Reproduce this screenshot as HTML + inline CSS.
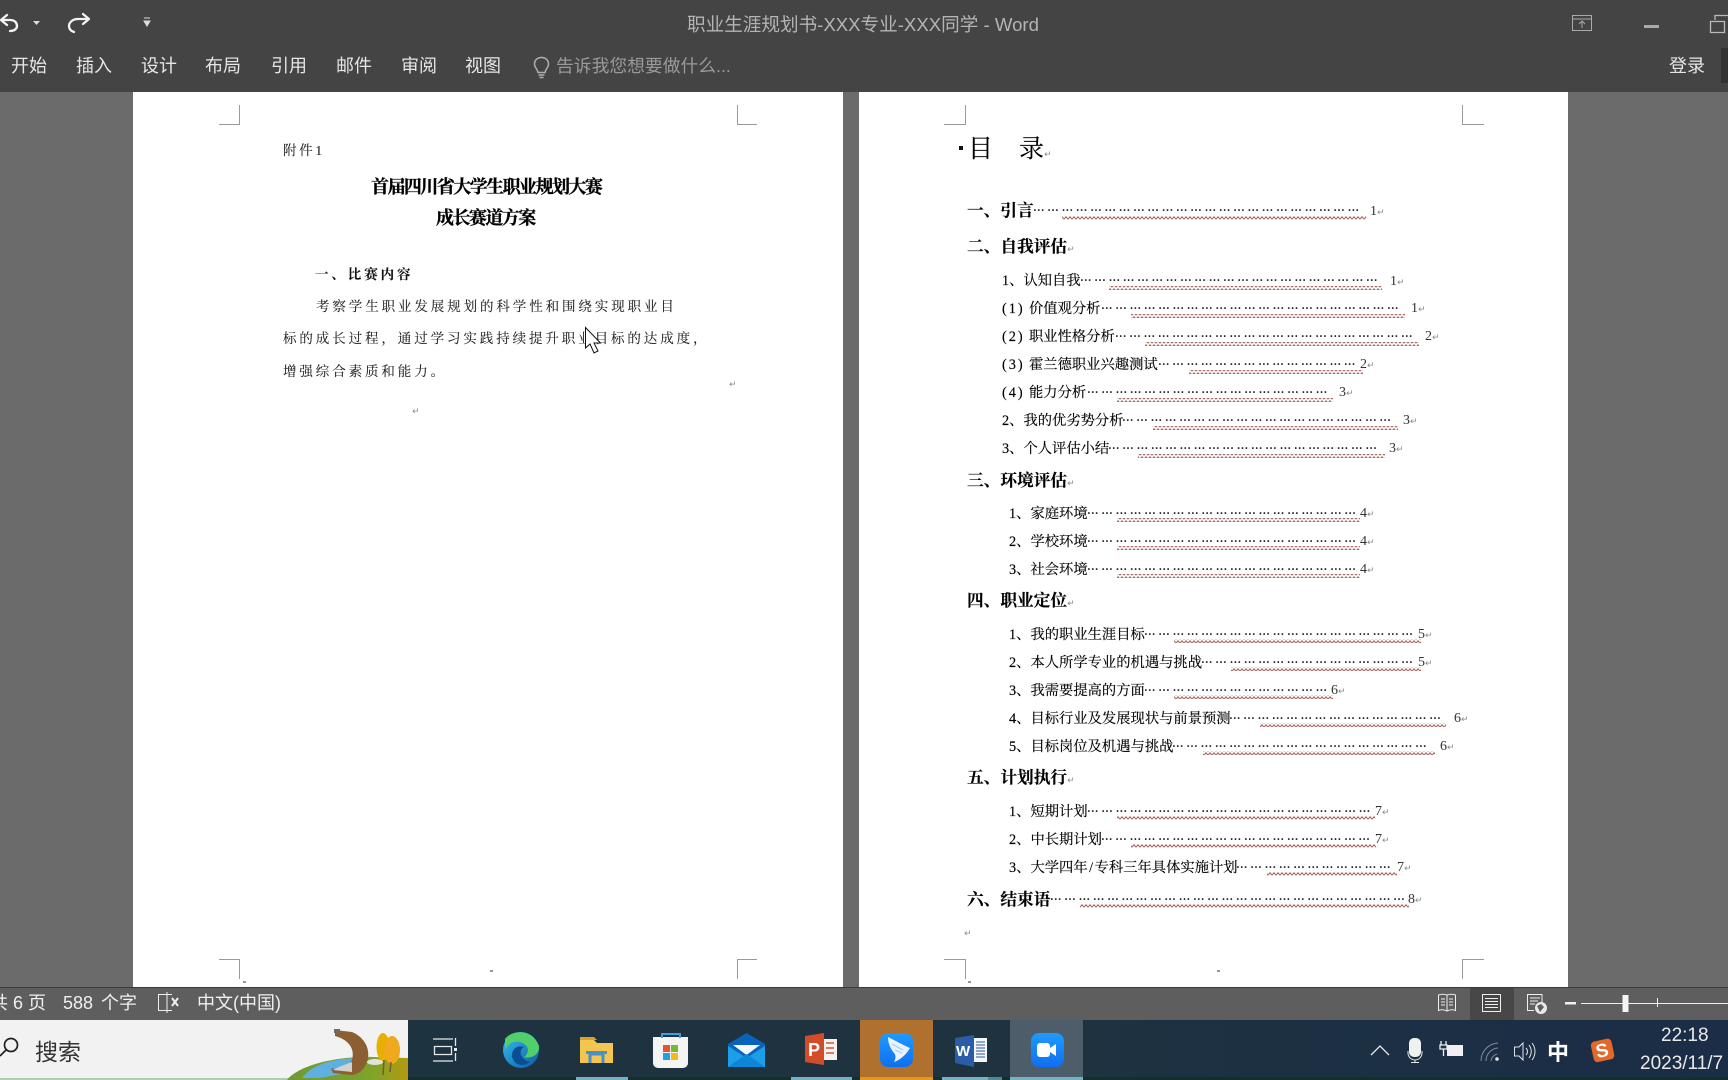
<!DOCTYPE html>
<html lang="zh-CN"><head><meta charset="utf-8"><title>Word</title>
<style>
html,body{margin:0;padding:0;width:1728px;height:1080px;overflow:hidden;background:#6b6b6b}
body{position:relative;font-family:"Liberation Sans","Noto Sans CJK SC",sans-serif}
.b{position:absolute}
.u{position:absolute;white-space:nowrap;color:#e6e6e6;font-size:18px;line-height:24px;height:24px}
.t{position:absolute;white-space:nowrap;height:20px;line-height:20px;margin-top:1px;font-size:14.3px;color:#000;-webkit-text-stroke:.15px #000;font-family:"Liberation Serif","Noto Serif CJK SC",serif}
.h{font-weight:700;font-size:16.7px;color:#000}
.d{position:absolute;height:20px;line-height:20px;margin-top:-2px;overflow:hidden;white-space:nowrap;font-size:11.5px;letter-spacing:2.8px;font-weight:700;color:#222;font-family:"Liberation Serif",serif}
.n{position:absolute;white-space:nowrap;height:20px;line-height:20px;margin-top:1px;font-size:14px;color:#333;font-family:"Liberation Serif",serif}
.p{display:inline-block;width:27px;letter-spacing:2px}
i{font-style:normal;font-size:9px;color:#8a8a8a;font-family:"DejaVu Sans",sans-serif;font-weight:400;-webkit-text-stroke:0}
.l{position:absolute;white-space:nowrap;height:22px;line-height:22px;margin-top:1px;font-size:13.5px;letter-spacing:2.9px;color:#222;-webkit-text-stroke:.1px #222;font-family:"Liberation Serif","Noto Serif CJK SC",serif}
.k{position:absolute;white-space:nowrap;color:#f0f0f0;font-size:18px;line-height:24px;height:24px;top:991px}
svg{position:absolute;left:0;top:0}
</style></head><body>

<div class="b" style="left:0;top:0;width:1728px;height:92px;background:#444"></div>
<div class="b" style="left:1721px;top:48px;width:7px;height:35px;background:#333"></div>
<div class="u" style="left:687px;top:13px;font-size:18.600px;color:#b4b4b4">职业生涯规划书-XXX专业-XXX同学 - Word</div>
<div class="u" style="left:11px;top:54px">开始</div>
<div class="u" style="left:76px;top:54px">插入</div>
<div class="u" style="left:141px;top:54px">设计</div>
<div class="u" style="left:205px;top:54px">布局</div>
<div class="u" style="left:271px;top:54px">引用</div>
<div class="u" style="left:336px;top:54px">邮件</div>
<div class="u" style="left:401px;top:54px">审阅</div>
<div class="u" style="left:465px;top:54px">视图</div>
<div class="u" style="left:556px;top:54px;font-size:17.800px;color:#9a9a9a">告诉我您想要做什么...</div>
<div class="u" style="left:1669px;top:54px">登录</div>

<div class="b" style="left:133px;top:92px;width:710px;height:895px;background:#fff"></div>
<div class="b" style="left:859px;top:92px;width:709px;height:895px;background:#fff"></div>

<div class="l" style="left:283px;top:139px;letter-spacing:2.700px">附件1</div>
<div class="t" style="left:371px;top:176px;font-size:18px;font-weight:700;letter-spacing:-1.55px;-webkit-text-stroke:.3px #000">首届四川省大学生职业规划大赛</div>
<div class="t" style="left:436px;top:207px;font-size:18px;font-weight:700;letter-spacing:-1.55px;-webkit-text-stroke:.3px #000">成长赛道方案</div>
<div class="l" style="left:315px;top:263px;font-weight:700;font-size:13.5px;color:#111">一、比赛内容</div>
<div class="l" style="left:316px;top:295px">考察学生职业发展规划的科学性和围绕实现职业目</div>
<div class="l" style="left:283px;top:327px">标的成长过程，通过学习实践持续提升职业目标的达成度，</div>
<div class="l" style="left:283px;top:360px">增强综合素质和能力。</div>
<div class="n" style="left:729px;top:373px"><i>↵</i></div>
<div class="n" style="left:412px;top:400px"><i>↵</i></div>

<div class="t" style="left:968px;top:134px;font-size:25px;height:30px;line-height:30px;color:#000">目<span style="margin-left:26px">录</span><i>↵</i></div>

<div class="t h" style="left:967px;top:200px">一、引言</div><div class="d" style="left:1033px;top:200px;width:327px">…………………………………………………………………………………………</div><div class="n" style="left:1370px;top:201px">1<i>↵</i></div>
<div class="t h" style="left:967px;top:236px">二、自我评估<i>↵</i></div>
<div class="t" style="left:1002px;top:270px">1、认知自我</div><div class="d" style="left:1080px;top:270px;width:298px">…………………………………………………………………………………………</div><div class="n" style="left:1390px;top:271px">1<i>↵</i></div>
<div class="t" style="left:1002px;top:298px"><span class="p">(1)</span>价值观分析</div><div class="d" style="left:1101px;top:298px;width:300px">…………………………………………………………………………………………</div><div class="n" style="left:1411px;top:298px">1<i>↵</i></div>
<div class="t" style="left:1002px;top:326px"><span class="p">(2)</span>职业性格分析</div><div class="d" style="left:1115px;top:326px;width:300px">…………………………………………………………………………………………</div><div class="n" style="left:1425px;top:326px">2<i>↵</i></div>
<div class="t" style="left:1002px;top:354px"><span class="p">(3)</span>霍兰德职业兴趣测试</div><div class="d" style="left:1158px;top:354px;width:200px">…………………………………………………………………………………………</div><div class="n" style="left:1360px;top:354px">2<i>↵</i></div>
<div class="t" style="left:1002px;top:382px"><span class="p">(4)</span>能力分析</div><div class="d" style="left:1087px;top:382px;width:242px">…………………………………………………………………………………………</div><div class="n" style="left:1339px;top:382px">3<i>↵</i></div>
<div class="t" style="left:1002px;top:410px">2、我的优劣势分析</div><div class="d" style="left:1122px;top:410px;width:272px">…………………………………………………………………………………………</div><div class="n" style="left:1403px;top:410px">3<i>↵</i></div>
<div class="t" style="left:1002px;top:438px">3、个人评估小结</div><div class="d" style="left:1108px;top:438px;width:270px">…………………………………………………………………………………………</div><div class="n" style="left:1389px;top:438px">3<i>↵</i></div>
<div class="t h" style="left:967px;top:470px">三、环境评估<i>↵</i></div>
<div class="t" style="left:1009px;top:503px">1、家庭环境</div><div class="d" style="left:1087px;top:503px;width:270px">…………………………………………………………………………………………</div><div class="n" style="left:1360px;top:503px">4<i>↵</i></div>
<div class="t" style="left:1009px;top:531px">2、学校环境</div><div class="d" style="left:1087px;top:531px;width:270px">…………………………………………………………………………………………</div><div class="n" style="left:1360px;top:531px">4<i>↵</i></div>
<div class="t" style="left:1009px;top:559px">3、社会环境</div><div class="d" style="left:1087px;top:559px;width:270px">…………………………………………………………………………………………</div><div class="n" style="left:1360px;top:559px">4<i>↵</i></div>
<div class="t h" style="left:967px;top:590px">四、职业定位<i>↵</i></div>
<div class="t" style="left:1009px;top:624px">1、我的职业生涯目标</div><div class="d" style="left:1144px;top:624px;width:270px">…………………………………………………………………………………………</div><div class="n" style="left:1418px;top:624px">5<i>↵</i></div>
<div class="t" style="left:1009px;top:652px">2、本人所学专业的机遇与挑战</div><div class="d" style="left:1201px;top:652px;width:213px">…………………………………………………………………………………………</div><div class="n" style="left:1418px;top:652px">5<i>↵</i></div>
<div class="t" style="left:1009px;top:680px">3、我需要提高的方面</div><div class="d" style="left:1144px;top:680px;width:185px">…………………………………………………………………………………………</div><div class="n" style="left:1331px;top:680px">6<i>↵</i></div>
<div class="t" style="left:1009px;top:708px">4、目标行业及发展现状与前景预测</div><div class="d" style="left:1229px;top:708px;width:214px">…………………………………………………………………………………………</div><div class="n" style="left:1454px;top:708px">6<i>↵</i></div>
<div class="t" style="left:1009px;top:736px">5、目标岗位及机遇与挑战</div><div class="d" style="left:1172px;top:736px;width:257px">…………………………………………………………………………………………</div><div class="n" style="left:1440px;top:736px">6<i>↵</i></div>
<div class="t h" style="left:967px;top:767px">五、计划执行<i>↵</i></div>
<div class="t" style="left:1009px;top:801px">1、短期计划</div><div class="d" style="left:1087px;top:801px;width:284px">…………………………………………………………………………………………</div><div class="n" style="left:1375px;top:801px">7<i>↵</i></div>
<div class="t" style="left:1009px;top:829px">2、中长期计划</div><div class="d" style="left:1101px;top:829px;width:270px">…………………………………………………………………………………………</div><div class="n" style="left:1375px;top:829px">7<i>↵</i></div>
<div class="t" style="left:1009px;top:857px">3、大学四年<span style="margin:0 1.5px">/</span>专科三年具体实施计划</div><div class="d" style="left:1236px;top:857px;width:158px">…………………………………………………………………………………………</div><div class="n" style="left:1397px;top:857px">7<i>↵</i></div>
<div class="t h" style="left:967px;top:889px">六、结束语</div><div class="d" style="left:1050px;top:889px;width:356px">…………………………………………………………………………………………</div><div class="n" style="left:1408px;top:889px">8<i>↵</i></div>
<div class="n" style="left:964px;top:922px"><i>↵</i></div>

<div class="b" style="left:0;top:987px;width:1728px;height:33px;background:#5e5e5e;border-top:1px solid #3a3a3a;box-sizing:border-box"></div>
<div class="b" style="left:1470px;top:988px;width:44px;height:32px;background:#474747"></div>
<div class="k" style="left:-10px">共 6 页</div>
<div class="k" style="left:63px;word-spacing:3px">588 个字</div>
<div class="k" style="left:197px">中文(中国)</div>

<div class="b" style="left:0;top:1020px;width:1728px;height:60px;background:linear-gradient(90deg,#1e3340,#1e3240 60%,#1b2d47)"></div>
<div class="b" style="left:0;top:1077px;width:1728px;height:3px;background:#12302a"></div>
<div class="b" style="left:0;top:1020px;width:408px;height:60px;background:#f2f2f2"></div>
<div class="b" style="left:0;top:1078px;width:300px;height:2px;background:#a9d0a8"></div>
<div class="b" style="left:35px;top:1036px;font-size:23px;line-height:32px;color:#333;white-space:nowrap">搜索</div>
<div class="b" style="left:860px;top:1020px;width:73px;height:60px;background:#b0712e"></div>
<div class="b" style="left:860px;top:1077px;width:73px;height:3px;background:#e8960f"></div>
<div class="b" style="left:1010px;top:1020px;width:73px;height:60px;background:#4d5d6a"></div>
<div class="b" style="left:576px;top:1077px;width:52px;height:3px;background:#6db5c0"></div>
<div class="b" style="left:791px;top:1077px;width:61px;height:3px;background:#6db5c0"></div>
<div class="b" style="left:942px;top:1077px;width:46px;height:3px;background:#6db5c0"></div>
<div class="b" style="left:988px;top:1077px;width:14px;height:3px;background:#4c8a94"></div>
<div class="b" style="left:1010px;top:1077px;width:73px;height:3px;background:#6db5c0"></div>
<div class="b" style="left:1661px;top:1024px;font-size:19px;line-height:24px;color:#eaeaea;white-space:nowrap">22:18</div>
<div class="b" style="left:1640px;top:1052px;font-size:19px;line-height:24px;color:#eaeaea;white-space:nowrap">2023/11/7</div>
<div class="b" style="left:1547px;top:1037px;font-size:22px;line-height:28px;font-weight:700;color:#fff;white-space:nowrap;font-family:'Noto Sans CJK SC',sans-serif">中</div>

<svg width="1728" height="1080" viewBox="0 0 1728 1080" fill="none">
<defs>
<pattern id="w" width="4" height="4" patternUnits="userSpaceOnUse"><path d="M0 3.2L2 .8L4 3.2" stroke="#a8615a" stroke-width="1.100"/></pattern>
<linearGradient id="eg" x1="0" y1="0" x2="1" y2="1"><stop offset="0" stop-color="#35c1f1"/><stop offset="1" stop-color="#0c59a4"/></linearGradient>
<linearGradient id="fs" x1="0" y1="0" x2="0" y2="1"><stop offset="0" stop-color="#1f9bff"/><stop offset="1" stop-color="#0f6ff0"/></linearGradient>
<linearGradient id="isl" x1="0" y1="0" x2="1" y2="0"><stop offset="0" stop-color="#6f9a35"/><stop offset=".7" stop-color="#7fa32a"/><stop offset="1" stop-color="#b39a10"/></linearGradient>
</defs>

<!-- spelling waves -->
<g fill="url(#w)">
<rect x="1062" y="216" width="304" height="4"/>
<rect x="1109" y="286" width="273" height="4"/>
<rect x="1131" y="314" width="274" height="4"/>
<rect x="1145" y="342" width="274" height="4"/>
<rect x="1189" y="370" width="174" height="4"/>
<rect x="1117" y="398" width="216" height="4"/>
<rect x="1153" y="426" width="245" height="4"/>
<rect x="1138" y="454" width="247" height="4"/>
<rect x="1117" y="518" width="243" height="4"/>
<rect x="1117" y="546" width="243" height="4"/>
<rect x="1117" y="574" width="243" height="4"/>
<rect x="1174" y="639" width="247" height="4"/>
<rect x="1231" y="667" width="190" height="4"/>
<rect x="1174" y="695" width="159" height="4"/>
<rect x="1260" y="723" width="186" height="4"/>
<rect x="1203" y="751" width="232" height="4"/>
<rect x="1117" y="816" width="258" height="4"/>
<rect x="1131" y="844" width="245" height="4"/>
<rect x="1267" y="872" width="130" height="4"/>
<rect x="1080" y="904" width="329" height="4"/>
</g>

<!-- page corners -->
<g stroke="#9a9a9a" stroke-width="1">
<path d="M219 124.500H239.500V105M737.500 105V124.500H757"/>
<path d="M219 959.500H239.500V979M737.500 979V959.500H757"/>
<path d="M944 124.500H965.500V105M1462.500 105V124.500H1484"/>
<path d="M944 959.500H965.500V979M1462.500 979V959.500H1484"/>
</g>
<rect x="959" y="146" width="4" height="4" fill="#111"/>
<g fill="#999"><rect x="490" y="970" width="3" height="2"/><rect x="243" y="981" width="3" height="2"/><rect x="1217" y="970" width="3" height="2"/><rect x="968" y="981" width="3" height="2"/></g>

<!-- cursor -->
<path d="M585.500 327.500V348L590 344L594 353L598 351L594 343H600.500Z" fill="#fff" stroke="#111" stroke-width="1"/>

<!-- title bar icons -->
<g stroke="#f2f2f2" stroke-width="2.300" stroke-linecap="round" stroke-linejoin="round">
<path d="M7 15L1 20L7 25M2 20H10C15 20 17 23 17 26C17 29 14 31 10 31"/>
<path d="M83 14L89 19L83 24M88 19H78C72 19 69 23 69 26C69 29 71 31 74 32"/>
</g>
<path d="M33 21H40L36.500 25Z" fill="#ddd"/>
<path d="M144 18H150M144 21H150L147 26Z" fill="#ddd" stroke="#ddd" stroke-width="1"/>
<path d="M1572.500 15.500H1591.500V30.500H1572.500ZM1572.500 19H1591.500M1582 28V21M1579 24L1582 21L1585 24" stroke="#aaa"/>
<rect x="1644" y="25" width="15" height="3" fill="#aaa"/>
<path d="M1710.500 21.500H1724.500V32.500H1710.500ZM1715 20V15.500H1728" stroke="#bbb" stroke-width="1.300"/>
<path d="M541.500 57.500C536.500 57.500 534.500 61 534.500 64C534.500 67.500 537.500 69 538 72.500H545C545.500 69 548.500 67.500 548.500 64C548.500 61 546.500 57.500 541.500 57.500ZM538.500 75H544.500M539.500 77.500H543.500" stroke="#b0b0b0" stroke-width="1.500"/>

<!-- status icons -->
<g stroke="#efefef" stroke-width="1">
<path d="M158.500 994.500H167V1010.500H158.500ZM167 994.500H172M167 1010.500H172M167 992V1013" />
<path d="M172 998L178 1006M178 998L172 1006" stroke-width="2"/>
<path d="M1447 995C1444 994 1441 994 1438.500 995V1010.500C1441 1009.500 1444 1009.500 1447 1011C1450 1009.500 1453 1009.500 1455.500 1010.500V995C1453 994 1450 994 1447 995ZM1447 995V1011M1441 999H1445M1441 1002H1445M1441 1005H1445M1449 999H1453M1449 1002H1453M1449 1005H1453"/>
<path d="M1482.500 994.500H1500.500V1011.500H1482.500ZM1485 998.500H1498M1485 1001.500H1498M1485 1004.500H1498M1485 1007.500H1498"/>
<path d="M1542 1005V994.500H1527.500V1010.500H1534M1530 998H1540M1530 1001H1538M1530 1004H1535"/>
</g>
<circle cx="1541" cy="1008" r="6" fill="#e8e8e8"/><path d="M1537 1006L1541 1004L1544 1007L1540 1012Z" fill="#5e5e5e"/>
<rect x="1565" y="1002" width="11" height="2.500" fill="#f0f0f0"/>
<rect x="1581" y="1003" width="147" height="1" fill="#efefef"/>
<rect x="1622.500" y="995" width="6" height="17" fill="#f5f5f5"/>
<rect x="1657" y="998" width="1" height="9" fill="#efefef"/>

<!-- search icon -->
<circle cx="11" cy="1045" r="6.500" stroke="#222" stroke-width="1.700"/><path d="M6 1050L0 1056" stroke="#222" stroke-width="1.700"/>

<!-- search illustration -->
<path d="M287 1080C300 1064 340 1056 372 1057L408 1058V1080Z" fill="url(#isl)"/>
<path d="M302 1078C312 1064 335 1058 362 1058L352 1072L320 1078Z" fill="#5fb0e0"/>
<ellipse cx="375" cy="1062" rx="8" ry="3" fill="#dfe5da"/>
<path d="M335 1030L352 1032C362 1036 370 1046 368 1058C366 1068 360 1074 352 1075L333 1073L331 1068C340 1071 348 1068 352 1060C355 1050 350 1040 335 1036Z" fill="#8c5f32"/>
<path d="M333 1070C340 1066 347 1064 352 1062L352 1072Z" fill="#cfd3cb"/>
<rect x="334" y="1029" width="6" height="4" fill="#6d6d60"/>
<ellipse cx="383" cy="1047" rx="6.500" ry="14" fill="#e6b000"/><ellipse cx="392" cy="1050" rx="8" ry="14" fill="#f0a81c"/>
<path d="M384 1060L383 1075M391 1062L390 1072" stroke="#7a5b2a" stroke-width="1.500"/>

<!-- task view -->
<path d="M433 1039H453M433 1061H453M434.500 1046.500H451.500V1054.500H434.500ZM455.500 1038V1046M455.500 1053V1061" stroke="#e8e8e8" stroke-width="1.300"/>
<rect x="454" y="1048" width="3" height="3" fill="#e8e8e8"/>

<!-- edge -->
<circle cx="521" cy="1050" r="18" fill="url(#eg)"/>
<path d="M505 1039C512 1029 533 1029 539 1046C540 1054 532 1059 524 1057C531 1052 528 1043 519 1042C512 1041 508 1044 505 1050Z" fill="#53cf6a"/>
<path d="M512 1056C512 1048 518 1045 524 1047C518 1050 520 1060 530 1062C522 1068 513 1064 512 1056Z" fill="#0b4d93"/>

<!-- folder -->
<path d="M580 1040H594L597 1043H613V1063H580Z" fill="#f3c64f"/><path d="M580 1037H594L597 1040H580Z" fill="#d9a128"/>
<path d="M590 1063V1054H603V1063" stroke="#4a90c8" stroke-width="3"/><rect x="586" y="1051" width="21" height="3" fill="#4a90c8"/>

<!-- store -->
<path d="M653 1037H688V1063A5 5 0 0 1 683 1068H658A5 5 0 0 1 653 1063Z" fill="#f4f4f4"/>
<path d="M662 1038V1034H680V1038" stroke="#3aa0e0" stroke-width="2"/>
<rect x="663" y="1045" width="7" height="7" fill="#e2562c"/><rect x="671" y="1045" width="7" height="7" fill="#7cb82f"/><rect x="663" y="1053" width="7" height="7" fill="#1ea1e6"/><rect x="671" y="1053" width="7" height="7" fill="#f5bb14"/>

<!-- mail -->
<path d="M728 1044L746.500 1033L765 1044V1067H728Z" fill="#0a63bb"/>
<path d="M733 1045H760L746.500 1055Z" fill="#f2f7fb"/>
<path d="M728 1046L746.500 1058L765 1046V1067H728Z" fill="#1ba0e8"/><path d="M728 1067L746.500 1054L765 1067Z" fill="#0e86d8"/>

<!-- ppt -->
<rect x="818" y="1039" width="19" height="21" fill="#f7f2ee"/>
<path d="M805 1036L824 1033V1065L805 1062Z" fill="#d24d27"/>
<text x="808" y="1056" font-size="18" font-weight="700" fill="#fff" font-family="Liberation Sans">P</text>
<path d="M826 1043H834M826 1048H834M826 1053H834" stroke="#c85a39" stroke-width="1.500"/>

<!-- feishu tile -->
<rect x="880" y="1033" width="33" height="34" rx="8" fill="url(#fs)"/>
<path d="M888 1037C892 1039 905 1046 910 1048C906 1055 900 1060 894 1062C896 1058 896 1055 894 1053C890 1048 888 1043 888 1037Z" fill="#eaf3ff"/>
<path d="M892 1044L903 1050M895 1050L902 1053" stroke="#9ccbff" stroke-width="1"/>

<!-- word -->
<rect x="973" y="1038" width="14" height="24" fill="#f4f6fa"/>
<path d="M976 1042H985M976 1045H985M976 1048H985M976 1051H985M976 1054H985M976 1057H985" stroke="#2b579a"/>
<path d="M955 1038L974 1035V1067L955 1063Z" fill="#2d5ca6"/>
<text x="956" y="1056" font-size="15" font-weight="700" fill="#fff" font-family="Liberation Sans">W</text>

<!-- zoom tile -->
<rect x="1031" y="1033" width="33" height="34" rx="8" fill="url(#fs)"/>
<rect x="1037" y="1043" width="13" height="14" rx="3" fill="#fff"/>
<path d="M1050 1048L1056 1044V1056L1050 1052Z" fill="#fff"/>

<!-- tray -->
<path d="M1371 1055L1380 1046L1389 1055" stroke="#e8e8e8" stroke-width="1.300"/>
<rect x="1409" y="1038" width="12" height="19" rx="5" fill="#f0f0f0"/>
<path d="M1408 1051V1053A6.500 6.500 0 0 0 1422 1053V1051M1415 1060V1062M1411 1062.500H1419" stroke="#e8e8e8"/>
<path d="M1441 1041V1045M1446 1041V1045M1440 1045H1447V1049H1440ZM1443.500 1049V1056" stroke="#f0f0f0" stroke-width="1.300"/>
<rect x="1447" y="1045" width="16" height="11" fill="#f0f0f0"/>
<path d="M1481 1061A18 18 0 0 1 1498 1043M1486 1061A13 13 0 0 1 1498 1048M1491 1061A8 8 0 0 1 1497 1054" stroke="#7f8a95" stroke-width="1"/>
<circle cx="1497" cy="1059" r="1.800" fill="#e8e8e8"/>
<path d="M1514.500 1047H1519L1523 1043V1060L1519 1056H1514.500ZM1526 1048C1528 1050 1528 1053 1526 1055M1529 1045C1532 1049 1532 1054 1529 1058M1532 1043C1536 1048 1536 1055 1532 1060" stroke="#e2e2e2" stroke-width="1"/>
<rect x="1592" y="1040" width="21" height="21" rx="4" fill="#e3682a" transform="rotate(-12 1602 1050)"/>
<text x="1602" y="1057" text-anchor="middle" font-size="19" font-weight="700" fill="#fff" font-family="Liberation Sans" transform="rotate(-12 1602 1050)">S</text>
</svg>
</body></html>
